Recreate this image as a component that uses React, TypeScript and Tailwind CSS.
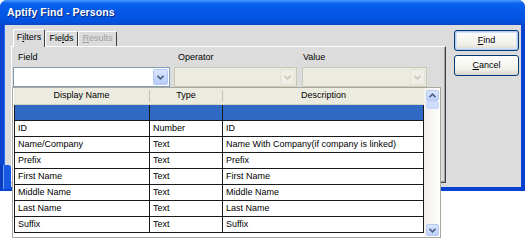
import React from "react";

const Chevron = ({ color, up = false }: { color: string; up?: boolean }) => (
  <svg width="7" height="5" viewBox="0 0 7 5" className={up ? "rotate-180" : ""}>
    <path d="M0.5 0.8 L3.5 3.8 L6.5 0.8" stroke={color} strokeWidth="1.6" fill="none" />
  </svg>
);

const rows: [string, string, string][] = [
  ["ID", "Number", "ID"],
  ["Name/Company", "Text", "Name With Company(if company is linked)"],
  ["Prefix", "Text", "Prefix"],
  ["First Name", "Text", "First Name"],
  ["Middle Name", "Text", "Middle Name"],
  ["Last Name", "Text", "Last Name"],
  ["Suffix", "Text", "Suffix"],
];

export default function App() {
  return (
    <div className="relative w-[529px] h-[251px] bg-white overflow-hidden font-['Liberation_Sans',Arial,sans-serif] text-[9px] text-black">
      {/* Window */}
      <div className="w-[525px] h-[191px] flex flex-col rounded-t-[7px] overflow-hidden bg-[#0842d0]">
        <div className="h-[25px] flex items-center pl-[7px] bg-[linear-gradient(to_bottom,#4a9cff_0%,#0a62ef_14%,#0457e6_50%,#0252e0_85%,#0a46c8_100%)]">
          <span className="text-white font-bold text-[10.5px] tracking-[0.1px] [text-shadow:1px_1px_0_#0a2a80]">
            Aptify Find - Persons
          </span>
        </div>
        <div className="flex-1 flex ml-[4px] mr-[4px] mb-[4px] bg-[#dcdcdc] pt-[4px] pl-[6px] border-l border-[#2a6af0]">
          {/* Left column: tabs + panel */}
          <div className="w-[435px] flex flex-col">
            <div className="h-[17px] flex items-end pl-[2px]">
              <div className="relative z-10 w-[32px] h-[18px] mb-[-1px] bg-[#dcdcdc] border-t border-l border-white border-r border-r-[#404040] rounded-t-[2px] flex items-center justify-center pb-[1px]">
                <span>
                  F<span className="underline">i</span>lters
                </span>
              </div>
              <div className="w-[33px] h-[15px] bg-[#dcdcdc] border-t border-l border-white border-r border-r-[#404040] rounded-t-[2px] flex items-center justify-center">
                <span>
                  Fie<span className="underline">l</span>ds
                </span>
              </div>
              <div className="w-[39px] h-[15px] bg-[#dcdcdc] border-t border-l border-white border-r border-r-[#404040] rounded-t-[2px] flex items-center justify-center text-[#a0a0a0]">
                <span>
                  <span className="underline">R</span>esults
                </span>
              </div>
            </div>
            <div className="h-[137px] border-t border-l border-white border-r border-b border-r-[#404040] border-b-[#404040] shadow-[inset_-1px_-1px_0_#a0a0a0] pt-[5px]">
              <div className="flex">
                <div className="ml-[1px] w-[157px] flex flex-col">
                  <div className="h-[11px] leading-[11px] pl-[5px]">Field</div>
                  <div className="mt-[4px] h-[20px] bg-white border border-[#7f9db9] flex items-center justify-end pr-[1px]">
                    <div className="w-[15px] h-[16px] rounded-[2px] border border-[#b4c8f6] bg-[linear-gradient(to_bottom,#dbe5fd,#b7ccf8)] flex items-center justify-center">
                      <Chevron color="#4d6185" />
                    </div>
                  </div>
                </div>
                <div className="ml-[4px] w-[123px] flex flex-col">
                  <div className="h-[11px] leading-[11px] pl-[4px]">Operator</div>
                  <div className="mt-[4px] h-[20px] bg-[#ecebe0] border border-[#c9c7ba] flex items-center justify-end pr-[1px]">
                    <div className="w-[15px] h-[16px] rounded-[2px] border border-[#e3e1d6] bg-[#efeee6] flex items-center justify-center">
                      <Chevron color="#c9c7ba" />
                    </div>
                  </div>
                </div>
                <div className="ml-[5px] w-[125px] flex flex-col">
                  <div className="h-[11px] leading-[11px] pl-[1px]">Value</div>
                  <div className="mt-[4px] h-[20px] bg-[#ecebe0] border border-[#c9c7ba] flex items-center justify-end pr-[1px]">
                    <div className="w-[15px] h-[16px] rounded-[2px] border border-[#e3e1d6] bg-[#efeee6] flex items-center justify-center">
                      <Chevron color="#c9c7ba" />
                    </div>
                  </div>
                </div>
              </div>
            </div>
          </div>
          {/* Buttons */}
          <div className="ml-[8px] mt-[1px] flex flex-col gap-[4px]">
            <div className="w-[65px] h-[21px] rounded-[3px] border border-[#003c74] bg-[linear-gradient(to_bottom,#ffffff,#f0f0ea_70%,#d8d6cc)] shadow-[inset_0_0_0_1px_#b6cbf3,inset_0_0_0_2px_#d3e0fa] flex items-center justify-center">
              <span>
                <span className="underline">F</span>ind
              </span>
            </div>
            <div className="w-[65px] h-[21px] rounded-[3px] border border-[#003c74] bg-[linear-gradient(to_bottom,#ffffff,#f0f0ea_70%,#d8d6cc)] flex items-center justify-center">
              <span>
                <span className="underline">C</span>ancel
              </span>
            </div>
          </div>
        </div>
      </div>

      {/* Bottom-left frame corner */}
      <div className="absolute left-0 top-[165px] w-[11px] h-[24px] bg-[#1858e6] rounded-tr-[3px] border-l-[3px] border-[#0a3cc0] shadow-[inset_1px_0_0_#6fa0ff]" />

      {/* Dropdown list overlay */}
      <div className="absolute left-[12px] top-[87px] w-[429px] h-[151px] border border-[#a8a89c] bg-white flex">
        <div className="w-[411px] flex flex-col pl-[1px]">
          <div className="h-[17px] flex bg-[#ecebe0] border-b border-[#d6d3c4]">
            <div className="w-[136px] flex items-center justify-center border-r border-[#c5c2b2] my-[2px]">Display Name</div>
            <div className="w-[73px] flex items-center justify-center border-r border-[#c5c2b2] my-[2px]">Type</div>
            <div className="flex-1 flex items-center justify-center">Description</div>
          </div>
          <div className="border-l border-[#1a1a1a] border-r">
            <div className="h-[16px] flex bg-[#316ac5] border-b border-[#1a1a1a]">
              <div className="w-[135px] border-r border-[#1a1a1a]" />
              <div className="w-[73px] border-r border-[#1a1a1a]" />
              <div className="flex-1" />
            </div>
            {rows.map((r, i) => (
              <div key={i} className="h-[16px] flex border-b border-[#1a1a1a] leading-[15px]">
                <div className="w-[135px] border-r border-[#1a1a1a] pl-[3px] whitespace-nowrap overflow-hidden">{r[0]}</div>
                <div className="w-[73px] border-r border-[#1a1a1a] pl-[3px] whitespace-nowrap overflow-hidden">{r[1]}</div>
                <div className="flex-1 pl-[3px] whitespace-nowrap overflow-hidden">{r[2]}</div>
              </div>
            ))}
          </div>
        </div>
        <div className="flex-1 flex flex-col bg-[linear-gradient(to_right,#f3f1ec,#fdfdfa)] px-[1px] pt-[2px] pb-[1px] items-center">
          <div className="w-[13px] h-[11px] rounded-[2px] border border-[#b8c9f2] bg-[linear-gradient(to_bottom,#dae5fd,#bcd0fa)] flex items-center justify-center">
            <Chevron color="#4d6185" up />
          </div>
          <div className="w-[13px] h-[8px] rounded-[2px] border border-[#c6d5f8] bg-[#cfdcfc]" />
          <div className="flex-1" />
          <div className="w-[13px] h-[12px] rounded-[2px] border border-[#b8c9f2] bg-[linear-gradient(to_bottom,#dae5fd,#bcd0fa)] flex items-center justify-center">
            <Chevron color="#4d6185" />
          </div>
        </div>
      </div>
    </div>
  );
}
